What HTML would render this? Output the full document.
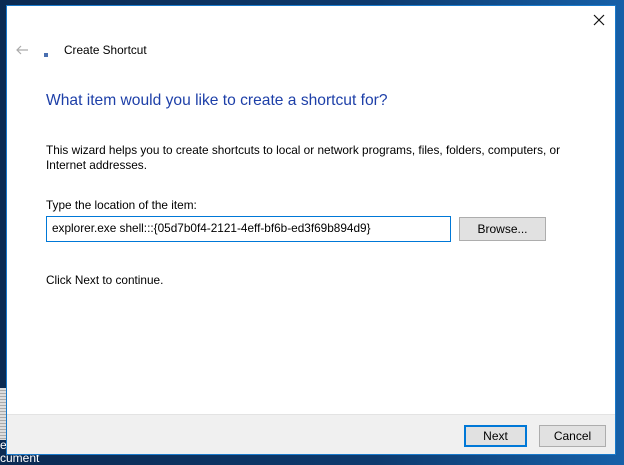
<!DOCTYPE html><html><head><style>
body{margin:0;width:624px;height:463px;overflow:hidden;background:linear-gradient(90deg,#0b2a52,#0d3a6e 60%,#1660a8);font-family:"Liberation Sans",sans-serif;position:relative}
.win{position:absolute;left:6px;top:5px;width:610px;height:450px;background:#fff;border:1px solid #1979ca;box-sizing:border-box}
.t{position:absolute;font-size:11.8px;color:#000;white-space:nowrap;letter-spacing:0}
.foot{position:absolute;left:0;right:0;top:408px;bottom:0;background:#f0f0f0;border-top:1px solid #e3e3e3}
.btn{position:absolute;background:#e1e1e1;border:1px solid #adadad;font-size:12px;text-align:center;box-sizing:border-box}
</style></head><body>
<div style="position:absolute;left:0;top:388px;width:6px;height:52px;background:repeating-linear-gradient(#ddd 0 2px,#aaa 2px 3px)"></div>
<div style="position:absolute;left:0;top:438px;font-size:12px;color:#fff">ev</div>
<div style="position:absolute;left:0;top:452px;font-size:12px;color:#fff;line-height:12px">cument</div>
<div class="win">
<svg style="position:absolute;left:586px;top:8px" width="12" height="12"><path d="M1 1L11 11M11 1L1 11" stroke="#111" stroke-width="1.2"/></svg>
<svg style="position:absolute;left:8px;top:38px" width="14" height="12"><path d="M13 6H2M6 2L2 6L6 10" stroke="#aaa" stroke-width="1.2" fill="none"/></svg>
<div style="position:absolute;left:37px;top:47px;width:4px;height:4px;background:#4a6fb0"></div>
<div class="t" style="left:57px;top:37px">Create Shortcut</div>
<div class="t" style="left:39px;top:86px;font-size:15.6px;color:#1d3fa8">What item would you like to create a shortcut for?</div>
<div class="t" style="left:39px;top:137px;line-height:15px">This wizard helps you to create shortcuts to local or network programs, files, folders, computers, or<br>Internet addresses.</div>
<div class="t" style="left:39px;top:192px">Type the location of the item:</div>
<div style="position:absolute;left:39px;top:210px;width:405px;height:26px;border:1px solid #0078d7;box-sizing:border-box"></div>
<div class="t" style="left:45px;top:215px">explorer.exe shell:::{05d7b0f4-2121-4eff-bf6b-ed3f69b894d9}</div>
<div class="btn" style="left:452px;top:211px;width:87px;height:24px;line-height:22px">Browse...</div>
<div class="t" style="left:39px;top:267px">Click Next to continue.</div>
<div class="foot">
<div class="btn" style="left:457px;top:10px;width:63px;height:22px;line-height:18px;border:2px solid #0078d7">Next</div>
<div class="btn" style="left:532px;top:10px;width:67px;height:22px;line-height:20px">Cancel</div>
</div>
</div>
</body></html>
